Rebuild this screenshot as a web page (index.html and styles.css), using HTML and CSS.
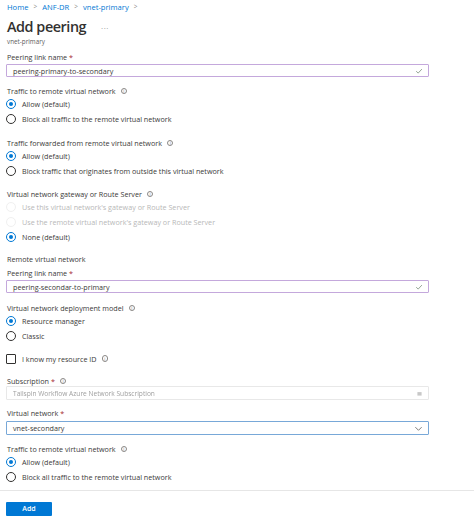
FILE: index.html
```html
<!DOCTYPE html>
<html>
<head>
<meta charset="utf-8">
<link rel="stylesheet" href="styles.css">
</head>
<body>
<div class="page">
  <div class="content">
    <div class="crumbs"><a>Home</a><span class="sep">&gt;</span><a>ANF-DR</a><span class="sep">&gt;</span><a>vnet-primary</a><span class="sep">&gt;</span></div>
    <div class="title"><h1>Add peering</h1><span class="more">···</span></div>
    <div class="sub">vnet-primary</div>

    <div class="label l1">Peering link name <span class="req">*</span></div>
    <div class="input valid"><span>peering-primary-to-secondary</span>
      <svg class="ic" viewBox="0 0 10 10" width="8" height="8"><path d="M1.5 5.3 L4 7.6 L8.6 2.6" fill="none" stroke="#7a8f7a" stroke-width="1"/></svg>
    </div>

    <div class="label l2">Traffic to remote virtual network <span class="info">i</span></div>
    <div class="radio on"><span class="dot"></span>Allow (default)</div>
    <div class="radio"><span class="dot"></span>Block all traffic to the remote virtual network</div>

    <div class="label l3">Traffic forwarded from remote virtual network <span class="info">i</span></div>
    <div class="radio on"><span class="dot"></span>Allow (default)</div>
    <div class="radio"><span class="dot"></span>Block traffic that originates from outside this virtual network</div>

    <div class="label l3b">Virtual network gateway or Route Server <span class="info">i</span></div>
    <div class="radio dis"><span class="dot"></span>Use this virtual network's gateway or Route Server</div>
    <div class="radio dis"><span class="dot"></span>Use the remote virtual network's gateway or Route Server</div>
    <div class="radio on"><span class="dot"></span>None (default)</div>

    <div class="label l4">Remote virtual network</div>
    <div class="label l5">Peering link name <span class="req">*</span></div>
    <div class="input valid"><span>peering-secondar-to-primary</span>
      <svg class="ic" viewBox="0 0 10 10" width="8" height="8"><path d="M1.5 5.3 L4 7.6 L8.6 2.6" fill="none" stroke="#7a8f7a" stroke-width="1"/></svg>
    </div>

    <div class="label l2b">Virtual network deployment model <span class="info">i</span></div>
    <div class="radio on"><span class="dot"></span>Resource manager</div>
    <div class="radio"><span class="dot"></span>Classic</div>

    <div class="check"><span class="box"></span>I know my resource ID <span class="info">i</span></div>

    <div class="label l6">Subscription <span class="req">*</span> <span class="info">i</span></div>
    <div class="input disabled"><span class="blur">Tailspin Workflow Azure Network Subscription</span>
      <svg class="ic" viewBox="0 0 10 10" width="7" height="7"><rect x="2" y="3" width="6" height="5" fill="#c8c8c8"/></svg>
    </div>

    <div class="label l7">Virtual network <span class="req">*</span></div>
    <div class="input select"><span>vnet-secondary</span>
      <svg class="ic" viewBox="0 0 10 10" width="9" height="9"><path d="M1.5 3.5 L5 7 L8.5 3.5" fill="none" stroke="#605e5c" stroke-width="0.9"/></svg>
    </div>

    <div class="label l8">Traffic to remote virtual network <span class="info">i</span></div>
    <div class="radio on"><span class="dot"></span>Allow (default)</div>
    <div class="radio"><span class="dot"></span>Block all traffic to the remote virtual network</div>
  </div>
  <div class="footer">
    <button class="btn">Add</button>
  </div>
</div>
</body>
</html>
```
FILE: styles.css
```css
html, body {
  margin: 0;
  padding: 0;
  background: #fff;
}
body {
  font-family: "Open Sans", "Noto Sans", "Liberation Sans", sans-serif;
  color: #3b3a39;
  font-size: 7.2px;
  width: 474px;
  height: 525px;
  overflow: hidden;
}
.content {
  padding: 0 0 0 6px;
}
.crumbs {
  height: 14px;
  line-height: 14px;
  font-size: 7.6px;
  padding-left: 1px;
  display: flex;
  align-items: center;
}
.crumbs a {
  color: #0078d4;
}
.crumbs .sep {
  color: #8a8886;
  margin: 0 5px;
  font-size: 6.5px;
}
.title {
  margin-top: 3px;
  height: 20px;
  display: flex;
  align-items: center;
  padding-left: 1px;
}
.title h1 {
  margin: 0;
  font-size: 14.4px;
  font-weight: 600;
  line-height: 20px;
  color: #323130;
  letter-spacing: -0.45px;
}
.title .more {
  margin-left: 15px;
  color: #8a8886;
  font-size: 8px;
  letter-spacing: 0.5px;
}
.sub {
  margin-top: 1px;
  height: 8px;
  line-height: 8px;
  font-size: 6.3px;
  color: #605e5c;
  padding-left: 1px;
}
.label {
  height: 10px;
  line-height: 10px;
  display: flex;
  align-items: center;
  padding-left: 1px;
  white-space: nowrap;
}
.req {
  color: #a4262c;
  margin-left: 2px;
}
.info {
  display: inline-flex;
  align-items: center;
  justify-content: center;
  width: 6.5px;
  height: 6.5px;
  border: 0.6px solid #8a8886;
  border-radius: 50%;
  font-size: 4.5px;
  line-height: 6px;
  color: #8a8886;
  margin-left: 5px;
  box-sizing: border-box;
}
.l1 { margin-top: 6px; }
.l2 { margin-top: 9px; }
.l3 { margin-top: 12px; }
.l3b { margin-top: 11px; }
.l4 { margin-top: 10px; }
.l5 { margin-top: 4px; }
.l2b { margin-top: 10px; }
.l6 { margin-top: 10px; }
.l7 { margin-top: 8px; }
.l8 { margin-top: 9px; }

.input {
  margin-top: 2px;
  width: 423px;
  height: 13px;
  box-sizing: border-box;
  border: 1px solid #8a8886;
  border-radius: 1px;
  display: flex;
  align-items: center;
  justify-content: space-between;
  padding: 0 5px 0 6px;
  white-space: nowrap;
}
.input.valid {
  border-color: #c4a8dc;
}
.input.disabled {
  height: 14px;
  margin-top: 0;
  border: 1.5px solid #e8e8e8;
  background: #fff;
  color: #b5b5b5;
}
.input.select {
  margin-top: 3px;
  height: 14px;
  border-color: #78a8d8;
}
.blur {
  filter: blur(0.6px);
  font-size: 6.6px;
  color: #a0a0a0;
}
.ic {
  flex: none;
}
.radio {
  height: 15px;
  display: flex;
  align-items: center;
  white-space: nowrap;
}
.radio .dot {
  width: 10px;
  height: 10px;
  box-sizing: border-box;
  border: 1px solid #323130;
  border-radius: 50%;
  margin-right: 6px;
  position: relative;
  flex: none;
}
.radio.on .dot {
  border-color: #0078d4;
}
.radio.on .dot::after {
  content: "";
  position: absolute;
  left: 2px;
  top: 2px;
  width: 4px;
  height: 4px;
  border-radius: 50%;
  background: #0078d4;
}
.radio.dis {
  color: #b8b8b8;
}
.radio.dis .dot {
  border-color: #f0f0f0;
}
.check {
  margin-top: 8px;
  height: 15px;
  display: flex;
  align-items: center;
  white-space: nowrap;
}
.check .box {
  width: 10px;
  height: 10px;
  box-sizing: border-box;
  border: 1px solid #323130;
  border-radius: 1px;
  margin-right: 6px;
  flex: none;
}
.footer {
  margin-top: 6px;
  border-top: 1px solid #e6e6e6;
  padding: 11px 0 0 6px;
}
.btn {
  display: block;
  width: 46px;
  height: 14px;
  border: none;
  border-radius: 1px;
  background: #0078d4;
  color: #fff;
  font-family: "Open Sans", "Noto Sans", sans-serif;
  font-weight: 600;
  font-size: 7px;
  padding: 0;
  line-height: 14px;
}
```
